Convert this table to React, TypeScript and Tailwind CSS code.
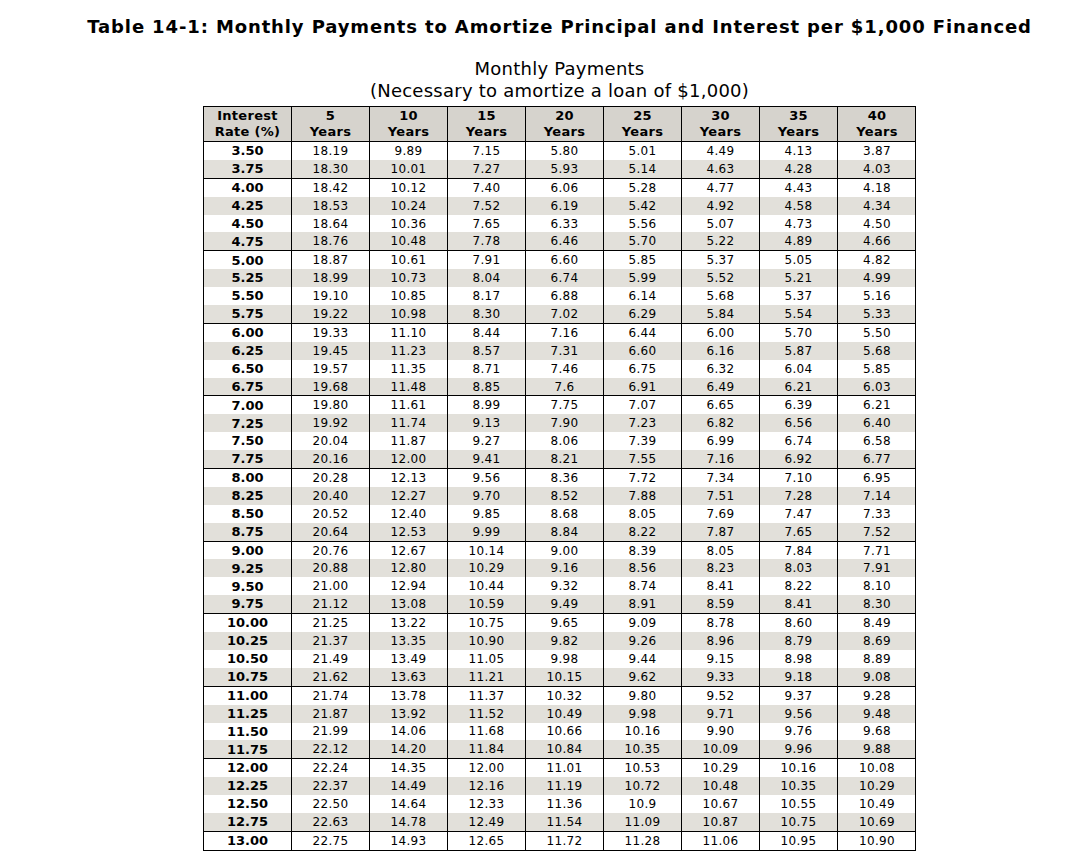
import React from 'react'

const YEARS = ['5', '10', '15', '20', '25', '30', '35', '40']

// one string per term column, top row (3.50%) first
const COLUMNS = [
  '18.19 18.30 18.42 18.53 18.64 18.76 18.87 18.99 19.10 19.22 19.33 19.45 19.57 19.68 19.80 19.92 20.04 20.16 20.28 20.40 20.52 20.64 20.76 20.88 21.00 21.12 21.25 21.37 21.49 21.62 21.74 21.87 21.99 22.12 22.24 22.37 22.50 22.63 22.75',
  '9.89 10.01 10.12 10.24 10.36 10.48 10.61 10.73 10.85 10.98 11.10 11.23 11.35 11.48 11.61 11.74 11.87 12.00 12.13 12.27 12.40 12.53 12.67 12.80 12.94 13.08 13.22 13.35 13.49 13.63 13.78 13.92 14.06 14.20 14.35 14.49 14.64 14.78 14.93',
  '7.15 7.27 7.40 7.52 7.65 7.78 7.91 8.04 8.17 8.30 8.44 8.57 8.71 8.85 8.99 9.13 9.27 9.41 9.56 9.70 9.85 9.99 10.14 10.29 10.44 10.59 10.75 10.90 11.05 11.21 11.37 11.52 11.68 11.84 12.00 12.16 12.33 12.49 12.65',
  '5.80 5.93 6.06 6.19 6.33 6.46 6.60 6.74 6.88 7.02 7.16 7.31 7.46 7.6 7.75 7.90 8.06 8.21 8.36 8.52 8.68 8.84 9.00 9.16 9.32 9.49 9.65 9.82 9.98 10.15 10.32 10.49 10.66 10.84 11.01 11.19 11.36 11.54 11.72',
  '5.01 5.14 5.28 5.42 5.56 5.70 5.85 5.99 6.14 6.29 6.44 6.60 6.75 6.91 7.07 7.23 7.39 7.55 7.72 7.88 8.05 8.22 8.39 8.56 8.74 8.91 9.09 9.26 9.44 9.62 9.80 9.98 10.16 10.35 10.53 10.72 10.9 11.09 11.28',
  '4.49 4.63 4.77 4.92 5.07 5.22 5.37 5.52 5.68 5.84 6.00 6.16 6.32 6.49 6.65 6.82 6.99 7.16 7.34 7.51 7.69 7.87 8.05 8.23 8.41 8.59 8.78 8.96 9.15 9.33 9.52 9.71 9.90 10.09 10.29 10.48 10.67 10.87 11.06',
  '4.13 4.28 4.43 4.58 4.73 4.89 5.05 5.21 5.37 5.54 5.70 5.87 6.04 6.21 6.39 6.56 6.74 6.92 7.10 7.28 7.47 7.65 7.84 8.03 8.22 8.41 8.60 8.79 8.98 9.18 9.37 9.56 9.76 9.96 10.16 10.35 10.55 10.75 10.95',
  '3.87 4.03 4.18 4.34 4.50 4.66 4.82 4.99 5.16 5.33 5.50 5.68 5.85 6.03 6.21 6.40 6.58 6.77 6.95 7.14 7.33 7.52 7.71 7.91 8.10 8.30 8.49 8.69 8.89 9.08 9.28 9.48 9.68 9.88 10.08 10.29 10.49 10.69 10.90',
].map(c => c.split(' '))

const RATES = Array.from({ length: 39 }, (_, i) => 3.5 + i * 0.25)

function HeaderRow() {
  return (
    <div className="flex h-[35px] border-b border-black bg-[#d6d3cd] font-bold text-[13px] leading-[16px] tracking-[0.3px]">
      <div className="w-[88px] shrink-0 border-r border-black flex flex-col items-center justify-center">
        <span>Interest</span>
        <span>Rate (%)</span>
      </div>
      {YEARS.map((y, i) => (
        <div
          key={y}
          className={`w-[78px] shrink-0 flex flex-col items-center justify-center ${i < 7 ? 'border-r border-black' : ''}`}
        >
          <span>{y}</span>
          <span>Years</span>
        </div>
      ))}
    </div>
  )
}

function Row({ idx }: { idx: number }) {
  const rate = RATES[idx]
  const groupStart = idx > 0 && rate % 1 === 0
  const shaded = idx % 2 === 1
  return (
    <div
      className={`flex ${groupStart ? 'border-t border-black' : ''} ${shaded ? 'bg-[#e2e0da]' : 'bg-white'}`}
    >
      <div className="w-[88px] h-[17.9px] shrink-0 border-r border-black flex items-center justify-center font-bold text-[13px]">
        {rate.toFixed(2)}
      </div>
      {COLUMNS.map((col, i) => (
        <div
          key={i}
          className={`w-[78px] h-[17.9px] shrink-0 flex items-center justify-center text-[12px] tracking-[0.3px] ${i < 7 ? 'border-r border-black' : ''}`}
        >
          {col[idx]}
        </div>
      ))}
    </div>
  )
}

export default function App() {
  return (
    <div className="w-[1080px] h-[866px] bg-white text-black font-['DejaVu_Sans',Verdana,sans-serif] pt-[16px]">
      <div className="ml-[203px] w-[713px] flex flex-col items-center">
        <h1 className="whitespace-nowrap text-[18px] leading-[22px] font-bold tracking-[0.88px]">
          Table 14-1: Monthly Payments to Amortize Principal and Interest per $1,000 Financed
        </h1>
        <div className="mt-[20px] text-[18px] leading-[22px] text-center whitespace-nowrap tracking-[0.25px]">
          <div>Monthly Payments</div>
          <div>(Necessary to amortize a loan of $1,000)</div>
        </div>
        <div className="mt-[4px] w-[713px] border border-black">
          <HeaderRow />
          {RATES.map((_, i) => (
            <Row key={i} idx={i} />
          ))}
        </div>
      </div>
    </div>
  )
}
